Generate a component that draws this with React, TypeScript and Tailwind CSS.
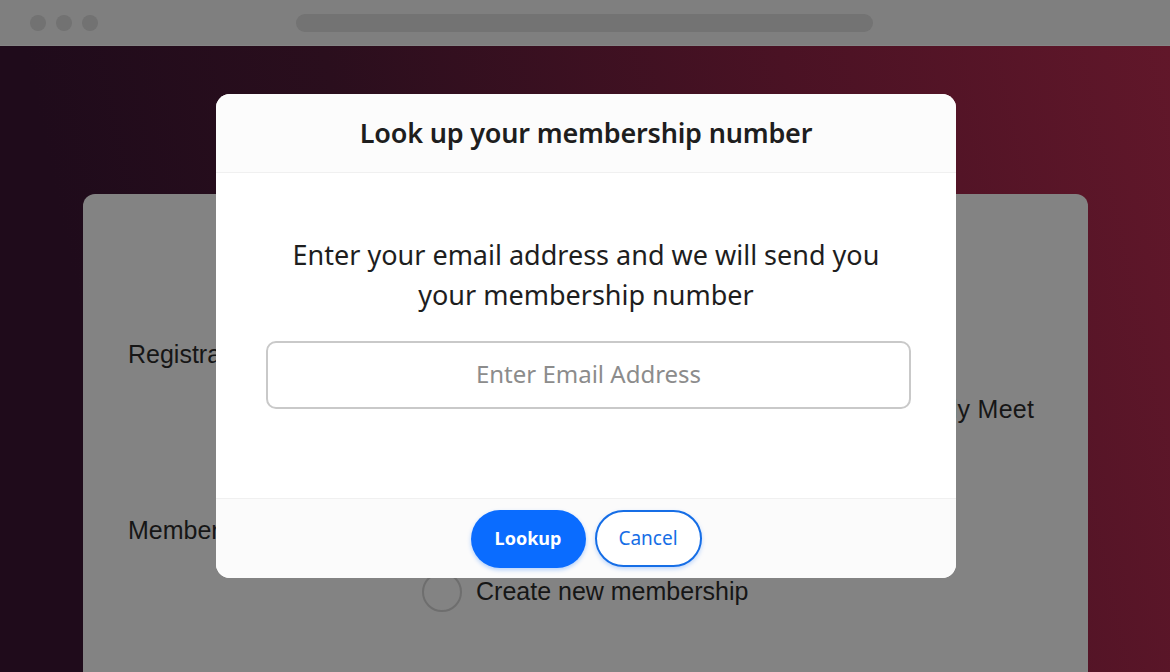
import React from "react";

export default function App() {
  return (
    <div className="relative w-[1170px] h-[672px] overflow-hidden font-['Liberation_Sans',sans-serif]">
      {/* browser chrome (dimmed) */}
      <div className="h-[46px] bg-[#7f7f7f] flex items-center border-b border-[#858585]">
        <div className="flex gap-[10px] pl-[30px]">
          <span className="w-[16px] h-[16px] rounded-full bg-[#727272]" />
          <span className="w-[16px] h-[16px] rounded-full bg-[#727272]" />
          <span className="w-[16px] h-[16px] rounded-full bg-[#727272]" />
        </div>
        <div className="ml-[198px] w-[577px] h-[18px] rounded-full bg-[#737373]" />
      </div>

      {/* page */}
      <div className="h-[626px] bg-[linear-gradient(78deg,#1f0b1b_12%,#2a0e1d_35%,#4a1224_70%,#61172a_100%)] pt-[148px] pl-[83px] pr-[82px]">
        <div className="h-[520px] rounded-[12px] bg-[#838383] pl-[45px] pr-[40px] pt-[140px] text-[#161616] text-[25px]">
          <div className="flex">
            <div className="w-[294px] shrink-0 leading-[40px]">Registration</div>
            <div className="flex flex-col gap-[16px]">
              <div className="flex items-center gap-[14px] h-[40px]">
                <span className="w-[40px] h-[40px] rounded-full border-2 border-[#6e6e6e]" />
                <span>Individual registration</span>
              </div>
              <div className="flex items-center gap-[14px] h-[40px] whitespace-nowrap">
                <span className="w-[40px] h-[40px] shrink-0 rounded-full border-2 border-[#6e6e6e]" />
                <span className="tracking-[0.25px]">Registering only for the 2024 Annual Family Meet</span>
              </div>
            </div>
          </div>
          <div className="flex mt-[80px]">
            <div className="w-[294px] shrink-0 leading-[40px]">Membership</div>
            <div className="flex flex-col gap-[22px]">
              <div className="flex items-center gap-[14px] h-[40px]">
                <span className="w-[40px] h-[40px] rounded-full border-2 border-[#6e6e6e]" />
                <span>Use existing membership</span>
              </div>
              <div className="flex items-center gap-[14px] h-[40px]">
                <span className="w-[40px] h-[40px] rounded-full border-2 border-[#6e6e6e]" />
                <span>Create new membership</span>
              </div>
            </div>
          </div>
        </div>
      </div>

      {/* modal */}
      <div className="absolute left-[216px] top-[94px] w-[740px] h-[484px] rounded-[14px] overflow-hidden bg-white flex flex-col font-['Noto_Sans',sans-serif]">
        <div className="h-[79px] bg-[#fcfcfc] border-b border-[#f0f0f0] flex items-center justify-center">
          <h2 className="text-[27px] font-semibold text-[#1e1e1e] tracking-[-0.2px]">Look up your membership number</h2>
        </div>
        <div className="flex-1 flex flex-col items-center pt-[62px]">
          <p className="text-[27px] leading-[40px] text-[#1e1e1e] text-center w-[640px]">
            Enter your email address and we will send you your membership number
          </p>
          <div className="mt-[26px] ml-[5px] w-[645px] h-[68px] rounded-[10px] border-2 border-[#c9c9c9] flex items-center justify-center pb-[3px]">
            <input
              className="w-full h-full bg-transparent text-center text-[24px] outline-none placeholder:text-[#8c8c8c]"
              placeholder="Enter Email Address"
            />
          </div>
        </div>
        <div className="h-[80px] bg-[#fbfbfb] border-t border-[#f0f0f0] flex items-center justify-center gap-[9px]">
          <button className="w-[115px] h-[58px] rounded-full bg-[#0a6cff] text-white text-[18px] font-bold shadow-[0_2px_4px_rgba(10,108,255,0.3)]">
            Lookup
          </button>
          <button className="w-[107px] h-[57px] rounded-full bg-white border-2 border-[#166ee6] text-[#166ee6] text-[19px] shadow-[0_2px_4px_rgba(10,108,255,0.25)]">
            Cancel
          </button>
        </div>
      </div>
    </div>
  );
}
